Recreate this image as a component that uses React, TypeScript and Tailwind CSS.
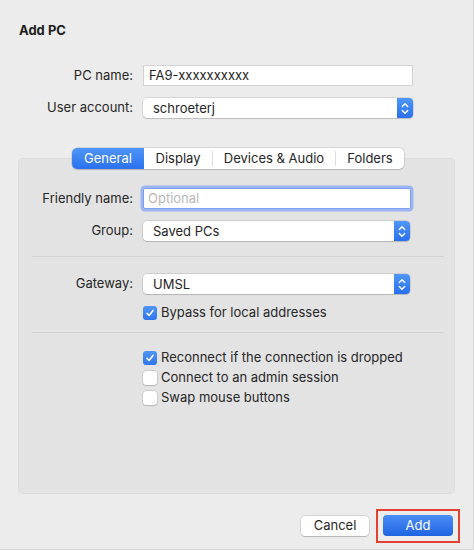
import React from "react";

const font = { fontFamily: "Inter, 'Noto Sans', sans-serif" };

function Stepper() {
  return (
    <div className="w-[16px] h-full rounded-r-[4px] bg-gradient-to-b from-[#4f97f8] to-[#2a6ff0] flex items-center justify-center">
      <svg width="8" height="13" viewBox="0 0 8 13" fill="none">
        <path d="M1.3 4.6 L4 1.8 L6.7 4.6" stroke="white" strokeWidth="1.4" strokeLinecap="round" strokeLinejoin="round" />
        <path d="M1.3 8.4 L4 11.2 L6.7 8.4" stroke="white" strokeWidth="1.4" strokeLinecap="round" strokeLinejoin="round" />
      </svg>
    </div>
  );
}

function Select({ value, w }: { value: string; w: string }) {
  return (
    <div className={`${w} h-[20px] bg-white rounded-[4px] shadow-[0_0_0_0.5px_rgba(0,0,0,0.18),0_1px_1px_rgba(0,0,0,0.12)] flex items-stretch`}>
      <div className="flex-1 pl-[10px] text-[13px] leading-[20px] text-[#262626]">{value}</div>
      <Stepper />
    </div>
  );
}

function Check({ checked, label }: { checked: boolean; label: string }) {
  return (
    <div className="flex items-center h-[20px]">
      {checked ? (
        <div className="w-[14px] h-[14px] rounded-[3px] bg-gradient-to-b from-[#4f95f7] to-[#2f76ef] flex items-center justify-center">
          <svg width="10" height="10" viewBox="0 0 10 10" fill="none">
            <path d="M2 5.3 L4.1 7.5 L8 2.4" stroke="white" strokeWidth="1.6" strokeLinecap="round" strokeLinejoin="round" />
          </svg>
        </div>
      ) : (
        <div className="w-[14px] h-[14px] rounded-[3px] bg-white shadow-[0_0_0_0.5px_rgba(0,0,0,0.2),0_1px_1px_rgba(0,0,0,0.1)]" />
      )}
      <span className="ml-[4px] text-[13px] text-[#262626]">{label}</span>
    </div>
  );
}

export default function App() {
  return (
    <div
      style={font}
      className="w-[474px] h-[550px] bg-[#ececec] flex flex-col border-r border-b border-[#d6d6d6] overflow-hidden"
    >
      <div className="pt-[22px] pl-[19px] text-[13px] leading-[16px] font-bold text-[#1d1d1d]">Add PC</div>

      <div className="mt-[27px] grid grid-cols-[133px_270px] gap-x-[10px] gap-y-[12px] items-center">
        <div className="text-right text-[13px] text-[#262626]">PC name:</div>
        <div className="h-[21px] bg-white border border-[#d2d2d2] pl-[5px] text-[13px] leading-[19px] text-[#262626]">
          FA9-xxxxxxxxxx
        </div>
        <div className="text-right text-[13px] text-[#262626]">User account:</div>
        <Select value="schroeterj" w="w-[270px]" />
      </div>

      <div className="mt-[30px] mx-[18px] flex flex-col">
        <div className="relative z-10 flex justify-center pl-[3px]">
          <div className="flex h-[21px] rounded-[5px] bg-white shadow-[0_0_0_0.5px_rgba(0,0,0,0.18),0_1px_1px_rgba(0,0,0,0.12)] text-[13px] text-[#262626] overflow-hidden">
            <div className="w-[72px] flex items-center justify-center bg-gradient-to-b from-[#4f95f7] to-[#2b70ef] text-white">
              General
            </div>
            <div className="w-[68px] flex items-center justify-center">Display</div>
            <div className="w-[1px] bg-[#dcdcdc] my-[3px]" />
            <div className="w-[122px] flex items-center justify-center">Devices &amp; Audio</div>
            <div className="w-[1px] bg-[#dcdcdc] my-[3px]" />
            <div className="w-[68px] flex items-center justify-center">Folders</div>
          </div>
        </div>

        <div className="-mt-[11px] h-[336px] bg-[#e3e3e3] rounded-[5px] shadow-[inset_0_0_0_0.5px_rgba(0,0,0,0.06)] flex flex-col">
          <div className="mt-[30px] grid grid-cols-[115px_268px] gap-x-[10px] gap-y-[12px] items-center">
            <div className="text-right text-[13px] text-[#262626]">Friendly name:</div>
            <div className="h-[21px] bg-white border border-[#7d9ff0] shadow-[0_0_0_2.5px_#9db6f2] rounded-[2px] pl-[4px] text-[13px] leading-[19px] text-[#b8b8b8]">
              Optional
            </div>
            <div className="text-right text-[13px] text-[#262626]">Group:</div>
            <Select value="Saved PCs" w="w-[267px]" />
          </div>

          <div className="mt-[15px] ml-[14px] mr-[11px] h-[1px] bg-[#d2d2d2]" />

          <div className="mt-[17px] grid grid-cols-[115px_267px] gap-x-[10px] items-center">
            <div className="text-right text-[13px] text-[#262626]">Gateway:</div>
            <Select value="UMSL" w="w-[267px]" />
          </div>
          <div className="mt-[9px] ml-[125px]">
            <Check checked label="Bypass for local addresses" />
          </div>

          <div className="mt-[9px] ml-[14px] mr-[11px] h-[1px] bg-[#d2d2d2]" />

          <div className="mt-[15px] ml-[125px] flex flex-col">
            <Check checked label="Reconnect if the connection is dropped" />
            <Check checked={false} label="Connect to an admin session" />
            <Check checked={false} label="Swap mouse buttons" />
          </div>
        </div>
      </div>

      <div className="mt-[15px] mr-[13px] flex justify-end items-center">
        <div className="w-[68px] h-[20px] bg-white rounded-[4px] shadow-[0_0_0_0.5px_rgba(0,0,0,0.2),0_1px_1px_rgba(0,0,0,0.15)] flex items-center justify-center text-[13px] text-[#262626]">
          Cancel
        </div>
        <div className="ml-[7px] border-[2.5px] border-[#e3402f] px-[5px] pt-[4px] pb-[5px]">
          <div className="w-[70px] h-[21px] rounded-[4px] bg-gradient-to-b from-[#4b8ef6] to-[#1f64e2] flex items-center justify-center text-[13px] text-white">
            Add
          </div>
        </div>
      </div>
    </div>
  );
}
